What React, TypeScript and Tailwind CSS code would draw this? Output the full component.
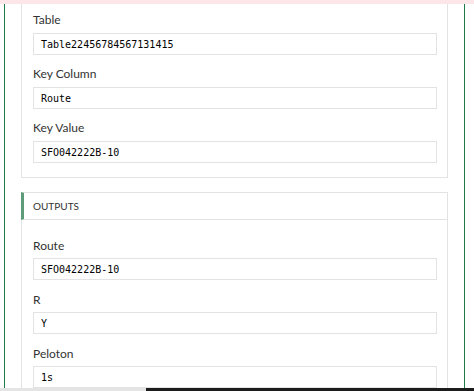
const inputs = [
  { label: "Table", value: "Table22456784567131415" },
  { label: "Key Column", value: "Route" },
  { label: "Key Value", value: "SFO042222B-10" },
];

const outputs = [
  { label: "Route", value: "SFO042222B-10" },
  { label: "R", value: "Y" },
  { label: "Peloton", value: "1s" },
];

const Field = ({ label, value, tight }: { label: string; value: string; tight?: boolean }) => (
  <div className={tight ? "mb-[11px]" : "mb-[10px]"}>
    <div className={tight ? "text-[12px] leading-[18px] mb-[3px] text-[#333333]" : "text-[12px] leading-[18px] mb-[4px] text-[#333333]"}>
      {label}
    </div>
    <div className="h-[22px] border border-[#e3e3e3] bg-white pl-[7px] flex items-center [font-family:'DejaVu_Sans_Mono',monospace] text-[10px] text-black">
      {value}
    </div>
  </div>
);

const App = () => {
  return (
    <div className="h-[391px] w-[474px] flex flex-col overflow-hidden bg-white [font-family:Lato,sans-serif]">
      <div className="h-[4px] bg-[#fce6e8] shrink-0" />
      <div className="flex-1 overflow-hidden">
        <div className="ml-[4px] w-[461px] h-full border-x border-[#1f7a48] px-4">
          {/* inputs card, top scrolled out of view */}
          <div className="border-x border-b border-[#e3e3e3] pl-[11px] pr-[10px] pt-[7px] pb-[4px]">
            {inputs.map((f) => (
              <Field key={f.label} label={f.label} value={f.value} />
            ))}
          </div>

          <div className="mt-[14px]">
            <div className="h-[28px] border border-[#e3e3e3] border-l-[3px] border-l-[#5c9c78] pl-[9px] flex items-center text-[10px] text-[#333333]">
              OUTPUTS
            </div>
            <div className="border-x border-b border-[#e3e3e3] pl-[11px] pr-[10px] pt-[17px]">
              {outputs.map((f) => (
                <Field key={f.label} label={f.label} value={f.value} tight />
              ))}
            </div>
          </div>
        </div>
      </div>
      <div className="h-[3px] shrink-0 flex">
        <div className="w-[146px] bg-[#e4e4e4]" />
        <div className="flex-1 bg-[#1c1c1c]" />
      </div>
    </div>
  );
};

export default App;
